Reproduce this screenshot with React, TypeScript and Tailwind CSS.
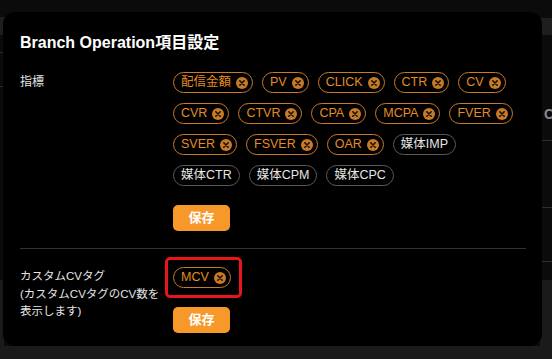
import React from 'react';

const FONT = { fontFamily: '"Liberation Sans", "Noto Sans CJK JP", sans-serif' };

const ACTIVE_ROWS = [
  ['配信金額', 'PV', 'CLICK', 'CTR', 'CV'],
  ['CVR', 'CTVR', 'CPA', 'MCPA', 'FVER'],
  ['SVER', 'FSVER', 'OAR'],
];

function XIcon() {
  return (
    <svg width="12" height="12" viewBox="0 0 12 12" className="shrink-0">
      <circle cx="6" cy="6" r="6" fill="#c97a26" />
      <path d="M3.8 3.8 L8.2 8.2 M8.2 3.8 L3.8 8.2" stroke="#1a1007" strokeWidth="1.6" strokeLinecap="round" />
    </svg>
  );
}

function Chip({ label }: { label: string }) {
  return (
    <span className="flex items-center gap-[5px] h-[21px] pl-[7px] pr-[4px] rounded-full border border-[#c97a26] text-[#e58d22] text-[12.5px] leading-none whitespace-nowrap">
      {label}
      <XIcon />
    </span>
  );
}

function GrayChip({ label }: { label: string }) {
  return (
    <span className="flex items-center h-[21px] px-[7px] rounded-full border border-[#5a5a5a] text-[#e6e6e6] text-[12.5px] leading-none whitespace-nowrap">
      {label}
    </span>
  );
}

function SaveBtn() {
  return (
    <button className="w-[57px] h-[26px] rounded-[5px] bg-[#f7982a] text-white text-[13px] font-bold">
      保存
    </button>
  );
}

export default function App() {
  return (
    <div className="relative w-[552px] h-[359px] overflow-hidden bg-[#0b0b0b]" style={FONT}>
      {/* page behind the modal */}
      <div className="absolute left-0 top-[17px] w-[6px] h-[18px] bg-[#1e1e1e]" />
      <div className="absolute right-0 top-[18px] w-[16px] h-[17px] bg-[#1e1e1e]" />
      <div className="absolute left-[544px] top-[104px] text-[#8a8a8a] text-[14px] font-bold">C</div>
      <div className="absolute right-0 top-[140px] w-[12px] h-px bg-[#2e2e2e]" />
      <div className="absolute right-0 top-[207px] w-[12px] h-px bg-[#2e2e2e]" />
      <div className="absolute right-0 top-[261px] w-[12px] h-px bg-[#2e2e2e]" />
      <div className="absolute left-0 top-[52px] w-[4px] h-px bg-[#2e2e2e]" />
      <div className="absolute left-0 top-[86px] w-[4px] h-px bg-[#2e2e2e]" />
      <div className="absolute right-0 top-[280px] w-[12px] h-[80px] bg-[#1a1a1a]" />
      <div className="absolute left-0 top-[280px] w-[4px] h-[80px] bg-[#1a1a1a]" />
      <div className="absolute left-0 bottom-0 w-full h-[13px] bg-[#1a1a1a]" />

      {/* modal */}
      <div className="absolute left-[3px] top-[12px] w-[539px] h-[334px] rounded-[12px] bg-black px-[17px] pt-[21px]">
        <h2 className="text-white text-[16px] font-bold leading-[20px]">Branch Operation項目設定</h2>

        <div className="flex mt-[19px]">
          <div className="w-[153px] text-[#e6e6e6] text-[12px] leading-[18px] pt-[1px]">指標</div>
          <div className="flex flex-col gap-[10px]">
            {ACTIVE_ROWS.map((row, i) => (
              <div key={i} className="flex gap-[9px]">
                {row.map(l => <Chip key={l} label={l} />)}
                {i === 2 && <GrayChip label="媒体IMP" />}
              </div>
            ))}
            <div className="flex gap-[9px]">
              {['媒体CTR', '媒体CPM', '媒体CPC'].map(l => <GrayChip key={l} label={l} />)}
            </div>
            <div className="mt-[9px]">
              <SaveBtn />
            </div>
          </div>
        </div>

        <div className="h-px bg-[#303030] mt-[17px] mr-[-1px]" />

        <div className="flex mt-[8px]">
          <div className="w-[145px] text-[#e6e6e6] text-[11.5px] leading-[17.5px] pt-[11px] whitespace-nowrap">
            カスタムCVタグ<br />(カスタムCVタグのCV数を<br />表示します)
          </div>
          <div className="flex flex-col">
            <div className="w-[77px] h-[41px] rounded-[5px] border-[3px] border-[#e8161b] flex items-center pl-[5px]">
              <Chip label="MCV" />
            </div>
            <div className="mt-[9px] ml-[8px]">
              <SaveBtn />
            </div>
          </div>
        </div>
      </div>
    </div>
  );
}
